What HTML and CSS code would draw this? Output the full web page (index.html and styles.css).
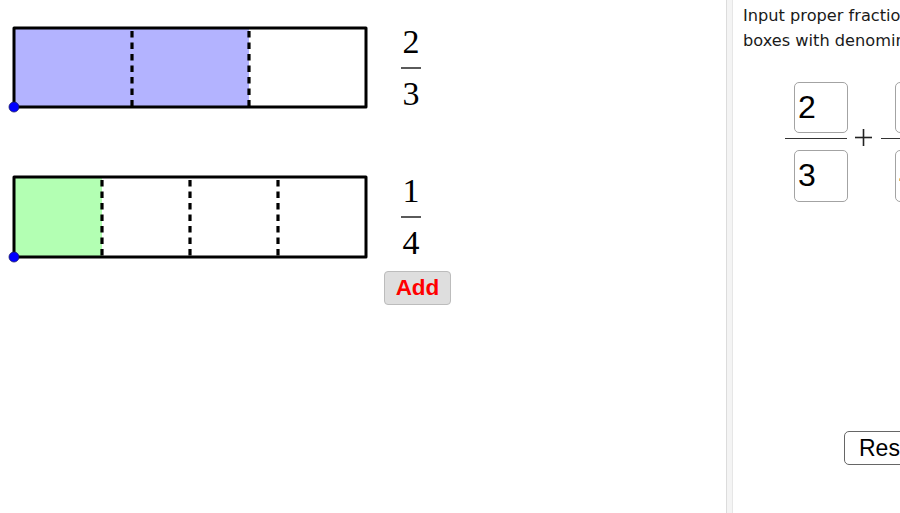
FILE: index.html
```html
<!DOCTYPE html>
<html>
<head>
<meta charset="utf-8">
<link rel="stylesheet" href="styles.css">
</head>
<body>
<div class="app">
  <div class="canvas">
    <svg class="drawing" width="726" height="513" viewBox="0 0 726 513">
      <!-- bar 1 : 2/3 -->
      <rect x="14" y="28" width="235" height="79" fill="#b3b3ff"/>
      <line x1="132" y1="28" x2="132" y2="107" class="dash"/>
      <line x1="249" y1="28" x2="249" y2="107" class="dash"/>
      <rect x="14" y="28" width="352" height="79" class="frame"/>
      <circle cx="14" cy="107" r="5" class="pt"/>
      <text x="411" y="53" class="frac">2</text>
      <line x1="401" y1="68" x2="421" y2="68" class="fline"/>
      <text x="411" y="105" class="frac">3</text>

      <!-- bar 2 : 1/4 -->
      <rect x="14" y="177" width="88" height="80" fill="#b3ffb3"/>
      <line x1="102" y1="177" x2="102" y2="257" class="dash"/>
      <line x1="190" y1="177" x2="190" y2="257" class="dash"/>
      <line x1="278" y1="177" x2="278" y2="257" class="dash"/>
      <rect x="14" y="177" width="352" height="80" class="frame"/>
      <circle cx="14" cy="257" r="5" class="pt"/>
      <text x="411" y="202" class="frac">1</text>
      <line x1="401" y1="217" x2="421" y2="217" class="fline"/>
      <text x="411" y="254" class="frac">4</text>
    </svg>
    <button class="add-btn">Add</button>
  </div>
  <div class="divider"></div>
  <div class="panel">
    <p class="intro">Input proper fractions in the<br>boxes with denominators less than 13.</p>
    <div class="sum-row">
      <div class="fraction first">
        <div class="box">2</div>
        <div class="bar"></div>
        <div class="box">3</div>
      </div>
      <svg class="plus" width="17" height="17" viewBox="0 0 17 17">
        <line x1="0" y1="8.5" x2="17" y2="8.5"/>
        <line x1="8.5" y1="0" x2="8.5" y2="17"/>
      </svg>
      <div class="fraction second">
        <div class="box">1</div>
        <div class="bar"></div>
        <div class="box">4</div>
      </div>
    </div>
    <button class="reset-btn">Reset</button>
  </div>
</div>
</body>
</html>
```

FILE: styles.css
```css
html, body {
  margin: 0;
  padding: 0;
  background: #ffffff;
  overflow: hidden;
}

.app {
  display: flex;
  width: 1200px;
  height: 513px;
}

.canvas {
  position: relative;
  width: 726px;
  height: 513px;
  flex: none;
}

.drawing {
  display: block;
}

.frame {
  fill: none;
  stroke: #000;
  stroke-width: 3;
  stroke-linejoin: round;
}

.dash {
  stroke: #000;
  stroke-width: 3.2;
  stroke-dasharray: 6.5 5;
  stroke-dashoffset: -3;
}

.pt {
  fill: #0000ff;
  stroke: #1a1a66;
  stroke-width: 0.8;
}

.frac {
  font-family: "Liberation Serif", serif;
  font-size: 34px;
  text-anchor: middle;
  fill: #000;
}

.fline {
  stroke: #000;
  stroke-width: 1.3;
}

.add-btn {
  position: absolute;
  left: 384px;
  top: 271px;
  width: 67px;
  height: 34px;
  margin: 0;
  padding: 0;
  background: #dedede;
  border: 1px solid #bcbcbc;
  border-radius: 4px;
  color: #ff0000;
  font-family: "Liberation Sans", Arial, sans-serif;
  font-weight: bold;
  font-size: 22.5px;
  line-height: 32px;
}

.divider {
  flex: none;
  width: 5px;
  height: 513px;
  background: #f4f4f4;
  border-left: 1px solid #dcdcdc;
  border-right: 1px solid #e6e6e6;
}

.panel {
  flex: none;
  width: 460px;
  padding-left: 10px;
  display: flex;
  flex-direction: column;
  align-items: flex-start;
}

.intro {
  margin: 0;
  padding-top: 3px;
  font-family: "DejaVu Sans", sans-serif;
  font-size: 16.2px;
  line-height: 25px;
  color: #1a1a1a;
  white-space: nowrap;
}

.sum-row {
  display: flex;
  align-items: flex-start;
  margin-top: 29px;
  margin-left: 42px;
}

.fraction {
  display: flex;
  flex-direction: column;
  align-items: flex-end;
}

.fraction.first {
  width: 63px;
}

.fraction.second {
  width: 68px;
}

.fraction.second .box {
  align-self: flex-start;
  margin-left: 14px;
}

.box {
  box-sizing: border-box;
  width: 54px;
  height: 51px;
  border: 1px solid #a3a3a3;
  border-radius: 5px;
  padding-left: 3px;
  font-family: "Liberation Sans", Arial, sans-serif;
  font-size: 32px;
  line-height: 49px;
  color: #000;
}

.fraction .box + .bar + .box {
  height: 52px;
  margin-top: 11px;
}

.bar {
  align-self: flex-start;
  width: 62px;
  height: 1px;
  margin-top: 5px;
  background: #333;
}

.plus {
  flex: none;
  margin-top: 47px;
  margin-left: 7px;
  margin-right: 9px;
}

.plus line {
  stroke: #222;
  stroke-width: 1.6;
}

.reset-btn {
  margin: 229px 0 0 101px;
  height: 34px;
  padding: 0 12px 0 14px;
  background: #ffffff;
  border: 1.5px solid #666;
  border-radius: 5px;
  font-family: "Liberation Sans", Arial, sans-serif;
  font-size: 23px;
  line-height: 30px;
  color: #000;
}
```
